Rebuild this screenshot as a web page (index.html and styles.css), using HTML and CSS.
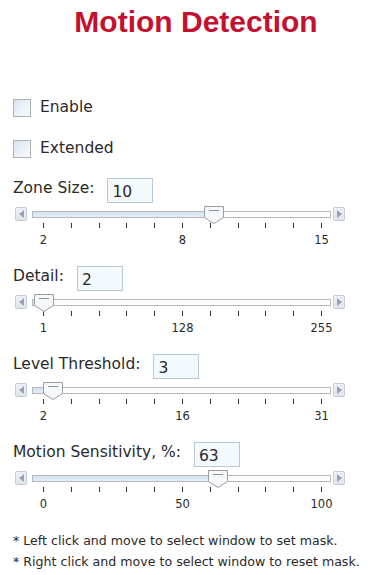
FILE: index.html
```html
<!DOCTYPE html>
<html>
<head>
<meta charset="utf-8">
<link rel="stylesheet" href="styles.css">
</head>
<body>
<div class="page">
  <h1 class="title">Motion Detection</h1>

  <label class="check first"><span class="box"></span><span class="ctext">Enable</span></label>
  <label class="check second"><span class="box"></span><span class="ctext">Extended</span></label>

  <section class="ctl">
    <div class="head"><span class="lbl">Zone Size:</span><input class="num" value="10"></div>
    <div class="slider" style="--v:0.6154">
      <span class="arrow"><svg width="5" height="8" viewBox="0 0 5 8"><path d="M5 0V8L0 4Z" fill="#98a2b0"/></svg></span>
      <div class="track"><div class="fill"></div><svg class="thumb" width="20" height="18" viewBox="0 0 20 18"><path d="M0.5 0.5H19.5V11.5L10 17.5L0.5 11.5Z" fill="#f6f7f9" stroke="#9a9ea4"/><path d="M5 4.5H15" stroke="#8e939a"/></svg></div>
      <span class="arrow right"><svg width="5" height="8" viewBox="0 0 5 8"><path d="M0 0V8L5 4Z" fill="#98a2b0"/></svg></span>
    </div>
    <div class="ticks"><i></i><i></i><i></i><i></i><i></i><i></i><i></i><i></i><i></i><i></i><i></i></div>
    <div class="labels"><span>2</span><span>8</span><span>15</span></div>
  </section>

  <section class="ctl">
    <div class="head"><span class="lbl">Detail:</span><input class="num" value="2"></div>
    <div class="slider" style="--v:0.0039">
      <span class="arrow"><svg width="5" height="8" viewBox="0 0 5 8"><path d="M5 0V8L0 4Z" fill="#98a2b0"/></svg></span>
      <div class="track"><div class="fill"></div><svg class="thumb" width="20" height="18" viewBox="0 0 20 18"><path d="M0.5 0.5H19.5V11.5L10 17.5L0.5 11.5Z" fill="#f6f7f9" stroke="#9a9ea4"/><path d="M5 4.5H15" stroke="#8e939a"/></svg></div>
      <span class="arrow right"><svg width="5" height="8" viewBox="0 0 5 8"><path d="M0 0V8L5 4Z" fill="#98a2b0"/></svg></span>
    </div>
    <div class="ticks"><i></i><i></i><i></i><i></i><i></i><i></i><i></i><i></i><i></i><i></i><i></i></div>
    <div class="labels"><span>1</span><span>128</span><span>255</span></div>
  </section>

  <section class="ctl">
    <div class="head"><span class="lbl">Level Threshold:</span><input class="num" value="3"></div>
    <div class="slider" style="--v:0.0345">
      <span class="arrow"><svg width="5" height="8" viewBox="0 0 5 8"><path d="M5 0V8L0 4Z" fill="#98a2b0"/></svg></span>
      <div class="track"><div class="fill"></div><svg class="thumb" width="20" height="18" viewBox="0 0 20 18"><path d="M0.5 0.5H19.5V11.5L10 17.5L0.5 11.5Z" fill="#f6f7f9" stroke="#9a9ea4"/><path d="M5 4.5H15" stroke="#8e939a"/></svg></div>
      <span class="arrow right"><svg width="5" height="8" viewBox="0 0 5 8"><path d="M0 0V8L5 4Z" fill="#98a2b0"/></svg></span>
    </div>
    <div class="ticks"><i></i><i></i><i></i><i></i><i></i><i></i><i></i><i></i><i></i><i></i><i></i></div>
    <div class="labels"><span>2</span><span>16</span><span>31</span></div>
  </section>

  <section class="ctl">
    <div class="head"><span class="lbl">Motion Sensitivity, %:</span><input class="num" value="63"></div>
    <div class="slider" style="--v:0.63">
      <span class="arrow"><svg width="5" height="8" viewBox="0 0 5 8"><path d="M5 0V8L0 4Z" fill="#98a2b0"/></svg></span>
      <div class="track"><div class="fill"></div><svg class="thumb" width="20" height="18" viewBox="0 0 20 18"><path d="M0.5 0.5H19.5V11.5L10 17.5L0.5 11.5Z" fill="#f6f7f9" stroke="#9a9ea4"/><path d="M5 4.5H15" stroke="#8e939a"/></svg></div>
      <span class="arrow right"><svg width="5" height="8" viewBox="0 0 5 8"><path d="M0 0V8L5 4Z" fill="#98a2b0"/></svg></span>
    </div>
    <div class="ticks"><i></i><i></i><i></i><i></i><i></i><i></i><i></i><i></i><i></i><i></i><i></i></div>
    <div class="labels"><span>0</span><span>50</span><span>100</span></div>
  </section>

  <div class="notes">
    <p>* Left click and move to select window to set mask.</p>
    <p>* Right click and move to select window to reset mask.</p>
  </div>
</div>
</body>
</html>
```
FILE: styles.css
```css
html, body {
  margin: 0;
  padding: 0;
  background: #ffffff;
}
body {
  font-family: "DejaVu Sans", Verdana, sans-serif;
  color: #2a2a2a;
}
.page {
  padding: 0 0 0 13px;
  width: 361px;
}
.title {
  margin: 5px 0 0;
  padding-left: 5px;
  text-align: center;
  font-family: "Liberation Sans", Arial, sans-serif;
  font-weight: 700;
  font-size: 30px;
  line-height: 34px;
  color: #c3112f;
}
.check {
  display: flex;
  align-items: center;
  gap: 9px;
  height: 18px;
}
.check.first { margin-top: 60px; }
.check.second { margin-top: 23px; }
.box {
  box-sizing: border-box;
  width: 18px;
  height: 18px;
  border: 1px solid #aeb0b3;
  background: linear-gradient(135deg, #d9e4f1 0%, #eef3f9 60%, #f8fafc 100%);
}
.ctext {
  font-size: 15.5px;
  line-height: 18px;
  position: relative;
  top: -1px;
}
.ctl {
  margin-top: 20px;
}
.ctl + .ctl {
  margin-top: 19px;
}
.head {
  display: flex;
  align-items: flex-start;
  gap: 12px;
  height: 25px;
}
.lbl {
  font-size: 15.5px;
  line-height: 21px;
}
.num {
  box-sizing: border-box;
  width: 46px;
  height: 25px;
  margin: 0 0 0 1px;
  padding: 2px 4px 0;
  border: 1px solid #b9c8d6;
  background: #f4f9fd;
  font-family: "DejaVu Sans", Verdana, sans-serif;
  font-size: 15.5px;
  color: #2a2a2a;
  outline: none;
}
.slider {
  display: flex;
  align-items: center;
  height: 14px;
  margin: 4px 0 0 2px;
}
.arrow {
  box-sizing: border-box;
  width: 12px;
  height: 14px;
  border: 1px solid #c6cdd7;
  border-radius: 2px;
  background: linear-gradient(#eef2f7, #dfe5ec);
  display: flex;
  align-items: center;
  justify-content: center;
}
.arrow svg { display: block; }
.track {
  position: relative;
  box-sizing: border-box;
  width: 299px;
  height: 7px;
  margin-left: 5px;
  margin-right: 2px;
  border: 1px solid #b5b7ba;
  background: #ffffff;
}
.fill {
  height: 100%;
  width: calc(var(--v) * 278px + 10px);
  background: linear-gradient(#d3e2f2, #e3edf8);
}
.thumb {
  position: absolute;
  top: -6px;
  left: calc(var(--v) * 278px);
  display: block;
}
.ticks {
  display: flex;
  justify-content: space-between;
  width: 279px;
  height: 5px;
  margin: 2px 0 0 30px;
}
.ticks i {
  display: block;
  width: 1px;
  height: 5px;
  background: #333333;
}
.labels {
  display: flex;
  justify-content: space-between;
  width: 279px;
  margin: 5px 0 0 30px;
  height: 14px;
}
.labels span {
  width: 1px;
  display: flex;
  justify-content: center;
  white-space: nowrap;
  font-size: 11.5px;
  line-height: 14px;
}
.notes {
  margin-top: 19px;
}
.notes p {
  margin: 0;
  font-size: 12.6px;
  line-height: 21px;
}
```
